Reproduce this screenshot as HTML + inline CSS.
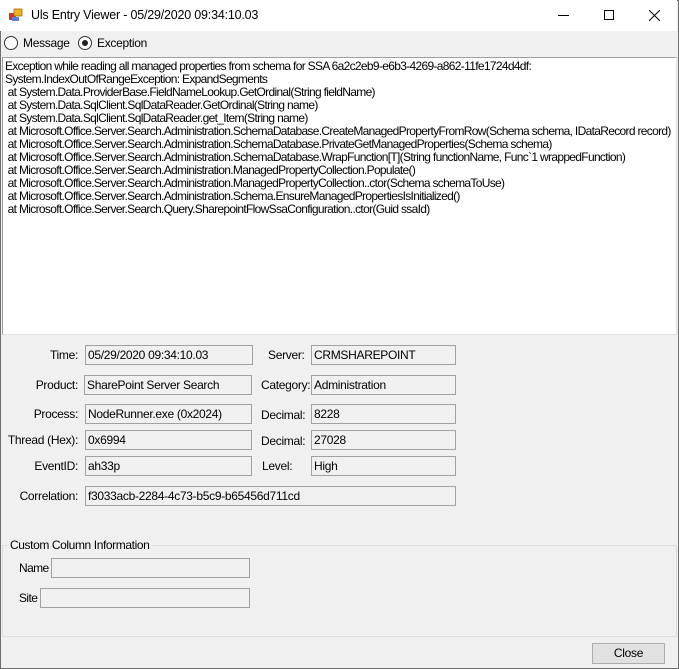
<!DOCTYPE html>
<html><head><style>
*{box-sizing:border-box;margin:0;padding:0}
body{width:679px;height:669px;background:#f0f0f0;font-family:"Liberation Sans",sans-serif;font-size:12px;color:#000;position:relative;overflow:hidden;letter-spacing:-0.3px}
.win{position:absolute;left:0;top:0;width:679px;height:669px;border:1px solid #6e6e6e}
.title{position:absolute;left:0;top:0;width:677px;height:31px;background:#fff}
.a{position:absolute;white-space:nowrap}
.ta{position:absolute;left:2px;top:57px;width:675px;height:278px;background:#fff;border:1px solid #a0a0a0;border-right-color:#e3e3e3;border-bottom-color:#e3e3e3;overflow:hidden}
.ta div{line-height:13px;white-space:nowrap;letter-spacing:-0.68px}
.box{position:absolute;height:20px;border:1px solid #a0a0a0;background:#f0f0f0;padding:2px 2px;line-height:14px;white-space:nowrap}
.lbl{position:absolute;text-align:right;white-space:nowrap}
.radio{position:absolute;width:14px;height:14px;border:1px solid #333;border-radius:50%;background:#fff}
</style></head><body>
<div class="win"></div>
<div class="title"></div>
<svg class="a" style="left:9px;top:8px" width="14" height="14"><rect x="0" y="5" width="7" height="7" fill="#c33"/><rect x="5" y="1" width="8" height="7" fill="#f0b020" stroke="#a07010" stroke-width="0.8"/><rect x="3" y="9" width="7" height="4" fill="#5a7fd0"/></svg>
<div class="a" style="left:31px;top:8px;font-size:12.5px;letter-spacing:-0.2px">Uls Entry Viewer - 05/29/2020 09:34:10.03</div>
<div class="a" style="left:558px;top:15px;width:11px;height:1px;background:#000"></div>
<div class="a" style="left:604px;top:10px;width:10px;height:10px;border:1px solid #000"></div>
<svg class="a" style="left:649px;top:10px" width="11" height="11"><path d="M0 0L11 11M11 0L0 11" stroke="#000" stroke-width="1"/></svg>
<div class="radio" style="left:4px;top:36px"></div>
<div class="a" style="left:23px;top:36px">Message</div>
<div class="radio" style="left:78px;top:36px"><div style="position:absolute;left:3px;top:3px;width:6px;height:6px;border-radius:50%;background:#222"></div></div>
<div class="a" style="left:97px;top:36px">Exception</div>
<div class="ta"><div style="padding:2px 0 0 2px">
<div>Exception while reading all managed properties from schema for SSA 6a2c2eb9-e6b3-4269-a862-11fe1724d4df:</div>
<div>System.IndexOutOfRangeException: ExpandSegments</div>
<div>&nbsp;at System.Data.ProviderBase.FieldNameLookup.GetOrdinal(String fieldName)</div>
<div>&nbsp;at System.Data.SqlClient.SqlDataReader.GetOrdinal(String name)</div>
<div>&nbsp;at System.Data.SqlClient.SqlDataReader.get_Item(String name)</div>
<div>&nbsp;at Microsoft.Office.Server.Search.Administration.SchemaDatabase.CreateManagedPropertyFromRow(Schema schema, IDataRecord record)</div>
<div>&nbsp;at Microsoft.Office.Server.Search.Administration.SchemaDatabase.PrivateGetManagedProperties(Schema schema)</div>
<div>&nbsp;at Microsoft.Office.Server.Search.Administration.SchemaDatabase.WrapFunction[T](String functionName, Func`1 wrappedFunction)</div>
<div>&nbsp;at Microsoft.Office.Server.Search.Administration.ManagedPropertyCollection.Populate()</div>
<div>&nbsp;at Microsoft.Office.Server.Search.Administration.ManagedPropertyCollection..ctor(Schema schemaToUse)</div>
<div>&nbsp;at Microsoft.Office.Server.Search.Administration.Schema.EnsureManagedPropertiesIsInitialized()</div>
<div>&nbsp;at Microsoft.Office.Server.Search.Query.SharepointFlowSsaConfiguration..ctor(Guid ssaId)</div>
</div></div>

<div class="lbl" style="right:601px;top:348px">Time:</div><div class="box" style="left:85px;top:345px;width:168px">05/29/2020 09:34:10.03</div>
<div class="lbl" style="left:268px;top:348px">Server:</div><div class="box" style="left:311px;top:345px;width:145px">CRMSHAREPOINT</div>
<div class="lbl" style="right:601px;top:378px">Product:</div><div class="box" style="left:84px;top:375px;width:168px">SharePoint Server Search</div>
<div class="lbl" style="left:261px;top:378px">Category:</div><div class="box" style="left:311px;top:375px;width:145px">Administration</div>
<div class="lbl" style="right:601px;top:407px">Process:</div><div class="box" style="left:85px;top:404px;width:167px">NodeRunner.exe (0x2024)</div>
<div class="lbl" style="left:261px;top:408px">Decimal:</div><div class="box" style="left:311px;top:404px;width:145px">8228</div>
<div class="lbl" style="right:601px;top:433px">Thread (Hex):</div><div class="box" style="left:85px;top:430px;width:167px">0x6994</div>
<div class="lbl" style="left:261px;top:434px">Decimal:</div><div class="box" style="left:311px;top:430px;width:145px">27028</div>
<div class="lbl" style="right:601px;top:459px">EventID:</div><div class="box" style="left:85px;top:456px;width:167px">ah33p</div>
<div class="lbl" style="left:262px;top:459px">Level:</div><div class="box" style="left:311px;top:456px;width:145px">High</div>
<div class="lbl" style="right:601px;top:489px">Correlation:</div><div class="box" style="left:85px;top:486px;width:371px">f3033acb-2284-4c73-b5c9-b65456d711cd</div>

<div class="a" style="left:2px;top:545px;width:675px;height:92px;border:1px solid #dcdcdc"></div>
<div class="a" style="left:8px;top:538px;background:#f0f0f0;padding:0 2px;letter-spacing:-0.4px">Custom Column Information</div>
<div class="a" style="left:19px;top:561px;letter-spacing:-0.6px">Name</div>
<div class="box" style="left:51px;top:558px;width:199px"></div>
<div class="a" style="left:19px;top:591px;letter-spacing:-0.6px">Site</div>
<div class="box" style="left:40px;top:588px;width:210px"></div>
<div class="a" style="left:592px;top:643px;width:73px;height:21px;border:1px solid #adadad;background:#e1e1e1;text-align:center;line-height:19px">Close</div>
</body></html>
